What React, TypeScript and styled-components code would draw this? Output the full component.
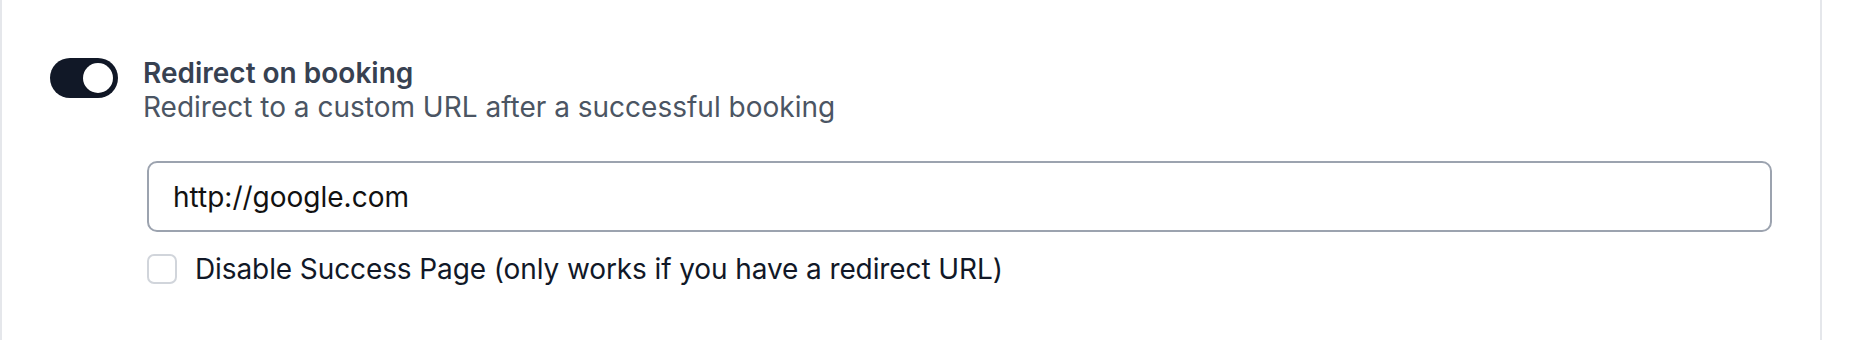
import React, { useState } from "react";
import styled, { createGlobalStyle } from "styled-components";

const GlobalStyle = createGlobalStyle`
  body {
    margin: 0;
    background: #ffffff;
    font-family: Inter, "Liberation Sans", sans-serif;
  }
`;

const Panel = styled.div`
  box-sizing: border-box;
  width: 1822px;
  height: 340px;
  border-left: 2px solid #e5e7eb;
  border-right: 2px solid #e5e7eb;
  padding: 58px 48px 0 48px;
`;

const SettingRow = styled.div`
  display: flex;
  align-items: flex-start;
  gap: 25px;
`;

const Track = styled.button<{ $on: boolean }>`
  flex: none;
  width: 68px;
  height: 40px;
  border: 0;
  border-radius: 20px;
  padding: 0 5px;
  background: ${(p) => (p.$on ? "#111827" : "#e5e7eb")};
  display: flex;
  align-items: center;
  justify-content: ${(p) => (p.$on ? "flex-end" : "flex-start")};
  cursor: pointer;
`;

const Knob = styled.span`
  width: 30px;
  height: 30px;
  border-radius: 50%;
  background: #ffffff;
  box-shadow: 0 1px 3px rgba(0, 0, 0, 0.25);
`;

const TextBlock = styled.div`
  display: flex;
  flex-direction: column;
  margin-top: -3px;
`;

const Title = styled.div`
  font-weight: 600;
  font-size: 28px;
  line-height: 36px;
  color: #374151;
`;

const Description = styled.div`
  font-size: 28px;
  line-height: 32px;
  color: #4b5563;
`;

const Details = styled.div`
  margin-left: 97px;
  padding-top: 38px;
  display: flex;
  flex-direction: column;
  gap: 21px;
`;

const UrlInput = styled.input`
  box-sizing: border-box;
  width: 100%;
  height: 71px;
  border: 2px solid #9ca3af;
  border-radius: 10px;
  padding: 0 24px;
  font-family: Inter, "Liberation Sans", sans-serif;
  font-size: 28px;
  color: #111111;
  outline: none;
`;

const CheckLabel = styled.label`
  display: flex;
  align-items: center;
  gap: 18px;
  font-size: 28px;
  line-height: 32px;
  letter-spacing: -0.1px;
  color: #111827;
  cursor: pointer;
`;

const Box = styled.span`
  box-sizing: border-box;
  flex: none;
  width: 30px;
  height: 30px;
  border: 2px solid #d1d5db;
  border-radius: 7px;
  background: #ffffff;
`;

export default function App() {
  const [on, setOn] = useState(true);
  const [url, setUrl] = useState("http://google.com");

  return (
    <>
      <GlobalStyle />
      <Panel>
        <SettingRow>
          <Track $on={on} onClick={() => setOn(!on)}>
            <Knob />
          </Track>
          <TextBlock>
            <Title>Redirect on booking</Title>
            <Description>Redirect to a custom URL after a successful booking</Description>
          </TextBlock>
        </SettingRow>
        <Details>
          <UrlInput value={url} onChange={(e) => setUrl(e.target.value)} />
          <CheckLabel>
            <Box />
            Disable Success Page (only works if you have a redirect URL)
          </CheckLabel>
        </Details>
      </Panel>
    </>
  );
}
